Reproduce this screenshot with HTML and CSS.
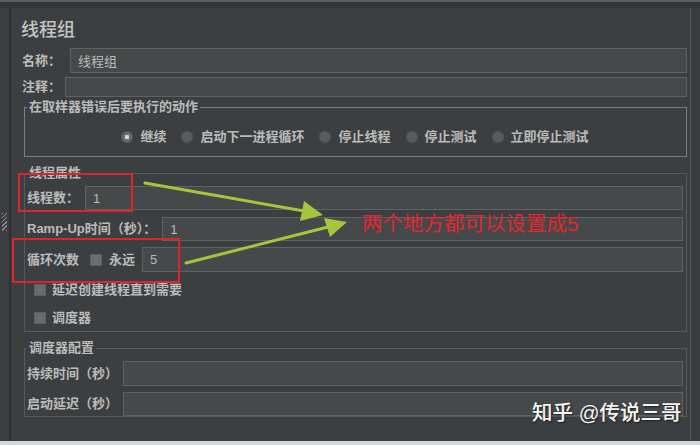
FILE: index.html
```html
<!DOCTYPE html>
<html lang="zh-CN">

<head>
    <meta charset="UTF-8">
    <meta name="viewport" content="width=device-width, initial-scale=1.0">
    <title>线程组</title>
    <link rel="stylesheet" href="styles.css">
</head>

<body>
    <div class="window">
        <div class="topbar"></div>

        <div class="main">
            <div class="splitter"><span class="grip"></span></div>

            <div class="panel">
                <h1 class="title">线程组</h1>

                <div class="row name-row">
                    <label class="label">名称：</label>
                    <div class="input">线程组</div>
                </div>
                <div class="row comment-row">
                    <label class="label">注释：</label>
                    <div class="input"></div>
                </div>

                <fieldset class="group group-action">
                    <legend>在取样器错误后要执行的动作</legend>
                    <div class="radios">
                        <span class="radio-item"><span class="radio checked"></span>继续</span>
                        <span class="radio-item"><span class="radio"></span>启动下一进程循环</span>
                        <span class="radio-item"><span class="radio"></span>停止线程</span>
                        <span class="radio-item"><span class="radio"></span>停止测试</span>
                        <span class="radio-item"><span class="radio"></span>立即停止测试</span>
                    </div>
                </fieldset>

                <fieldset class="group group-props">
                    <legend>线程属性</legend>
                    <div class="row field-row">
                        <label class="label">线程数：</label>
                        <div class="input">1</div>
                    </div>
                    <div class="row field-row ramp-row">
                        <label class="label">Ramp-Up时间（秒）：</label>
                        <div class="input">1</div>
                    </div>
                    <div class="row field-row loop-row">
                        <label class="label">循环次数</label>
                        <span class="check"></span>
                        <label class="label">永远</label>
                        <div class="input">5</div>
                    </div>
                    <div class="check-row first-check">
                        <span class="check"></span>
                        <span class="label">延迟创建线程直到需要</span>
                    </div>
                    <div class="check-row">
                        <span class="check"></span>
                        <span class="label">调度器</span>
                    </div>
                </fieldset>

                <fieldset class="group group-sched">
                    <legend>调度器配置</legend>
                    <div class="row field-row">
                        <label class="label">持续时间（秒）</label>
                        <div class="input"></div>
                    </div>
                    <div class="row field-row">
                        <label class="label">启动延迟（秒）</label>
                        <div class="input"></div>
                    </div>
                </fieldset>
            </div>

            <div class="rightstrip"></div>
        </div>

        <div class="bottombar"></div>

        <!-- annotations drawn over the form -->
        <div class="mark mark-threads"></div>
        <div class="mark mark-loops"></div>

        <svg class="arrows" width="700" height="445" viewBox="0 0 700 445">
            <g stroke="#a3c63c" stroke-width="3" fill="#a3c63c" stroke-linecap="round">
                <line x1="145" y1="183" x2="304" y2="211" />
                <polygon stroke="none" points="323,215 300,221 304,201" />
                <line x1="186" y1="263" x2="328" y2="227" />
                <polygon stroke="none" points="347,222 330,237 324,218" />
            </g>
        </svg>

        <div class="note">两个地方都可以设置成5</div>
        <div class="watermark">知乎 @传说三哥</div>
    </div>
</body>

</html>
```

FILE: styles.css
```css
body {
    margin: 0;
    background-color: #3c3f41;
    font-family: "Liberation Sans", "Noto Sans CJK SC", sans-serif;
    color: #bbbbbb;
}

.window {
    position: relative;
    width: 700px;
    height: 445px;
    overflow: hidden;
    display: flex;
    flex-direction: column;
    background-color: #3c3f41;
}

.topbar {
    height: 6px;
    border-top: 2px solid #5c5f62;
    background-color: #343638;
}

.main {
    flex: 1;
    display: flex;
    min-height: 0;
}

.splitter {
    width: 9px;
    border-right: 2px solid #2d2f31;
    display: flex;
    align-items: center;
    justify-content: center;
}

.grip {
    width: 5px;
    height: 18px;
    margin-top: -6px;
    background: repeating-linear-gradient(135deg, #8a8d8f 0 1px, transparent 1px 3px);
}

.panel {
    flex: 1;
    padding: 10px 3px 0 11px;
    border-right: 1px solid #56595b;
}

.rightstrip {
    width: 9px;
    background-color: #3a3d3f;
}

.bottombar {
    height: 4px;
    background-color: #d4d5d5;
}

.title {
    margin: 0 0 0 -1px;
    font-size: 18px;
    line-height: 24px;
    font-weight: 500;
    color: #c4c4c4;
}

.row {
    display: flex;
    align-items: center;
}

.label {
    font-size: 13px;
    line-height: 16px;
    font-weight: 700;
    white-space: nowrap;
}

.input {
    flex: 1;
    align-self: stretch;
    display: flex;
    align-items: center;
    padding-left: 7px;
    background-color: #45494a;
    border: 1px solid #5e6263;
    font-size: 13px;
    color: #bbbbbb;
}

.name-row {
    height: 25px;
    margin-top: 6px;
    gap: 9px;
}

.comment-row {
    height: 20px;
    margin-top: 4px;
    gap: 4px;
}

/* titled borders */
.group {
    margin: 0 0 0 2px;
    padding: 0 3px 0 2px;
    border: 1px solid #575a5c;
}

.group legend {
    padding: 0 2px;
    font-size: 13px;
    line-height: 16px;
    font-weight: 700;
}

.group-action {
    margin-top: 2px;
    padding-top: 14px;
    padding-bottom: 11px;
    border-color: #7b7e80;
}

.radios {
    display: flex;
    justify-content: center;
    gap: 15px;
    height: 16px;
}

.radio-item {
    display: flex;
    align-items: center;
    gap: 7px;
    font-size: 13px;
    line-height: 16px;
    font-weight: 700;
}

.radio {
    width: 12px;
    height: 12px;
    border-radius: 50%;
    background-color: #595c5e;
    box-shadow: inset 0 0 0 1px #4e5153;
}

.radio.checked {
    background: radial-gradient(circle, #d8d8d8 0 2px, #6a6d6f 2.5px);
}

.group-props {
    margin-top: 8px;
    padding-top: 5px;
    padding-bottom: 5px;
}

.field-row {
    height: 24px;
    gap: 6px;
}

.ramp-row {
    margin-top: 7px;
}

.loop-row {
    height: 25px;
    margin-top: 6px;
    gap: 7px;
}

.loop-row .check {
    margin-left: 4px;
}

.check {
    width: 12px;
    height: 12px;
    background-color: #696c6e;
    box-shadow: inset 0 0 0 1px #5c5f61;
}

.check-row {
    display: flex;
    align-items: center;
    gap: 6px;
    height: 16px;
    margin-top: 12px;
    padding-left: 7px;
}

.first-check {
    margin-top: 10px;
}

.group-sched {
    margin-top: 8px;
    padding-top: 5px;
    padding-bottom: 0;
}

.group-sched .field-row {
    height: 25px;
    gap: 5px;
}

.group-sched .field-row + .field-row {
    margin-top: 6px;
    height: 24px;
}

/* red highlight boxes */
.mark {
    position: absolute;
    border: 2px solid #e1232c;
}

.mark-threads {
    left: 18px;
    top: 173px;
    width: 111px;
    height: 35px;
}

.mark-loops {
    left: 12px;
    top: 238px;
    width: 164px;
    height: 41px;
}

.arrows {
    position: absolute;
    left: 0;
    top: 0;
}

.note {
    position: absolute;
    left: 362px;
    top: 211px;
    font-size: 20.5px;
    line-height: 26px;
    color: #e3262f;
    white-space: nowrap;
}

.watermark {
    position: absolute;
    left: 532px;
    top: 400px;
    font-size: 20.5px;
    line-height: 26px;
    font-weight: 500;
    color: #f4f4f4;
    text-shadow: 1px 1px 2px #1e1f20;
    white-space: nowrap;
}
```
